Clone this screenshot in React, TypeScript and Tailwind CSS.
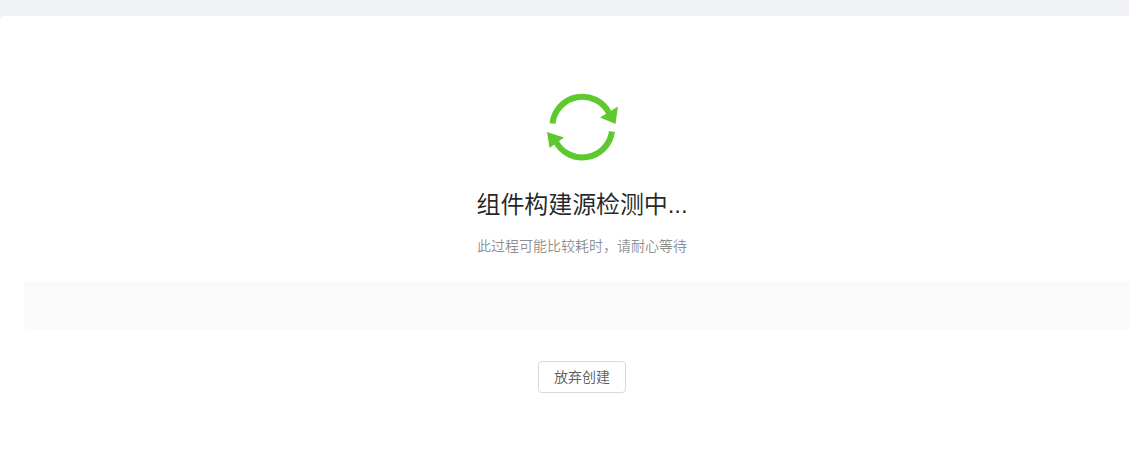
export default function App() {
  return (
    <div className="h-[462px] overflow-hidden bg-[#f0f2f5] pt-4 font-['Liberation_Sans','Noto_Sans_CJK_SC',sans-serif]">
      <div className="h-[500px] w-[1164px] rounded bg-white px-6 pt-[75px]">
        <div className="flex flex-col items-center">
          <svg width="72" height="72" viewBox="0 0 72 72" fill="none" className="block">
            <path d="M6.5 32.5A30 30 0 0 1 63 22" stroke="#5ec82f" strokeWidth="6" />
            <path d="M72 15.5L69.5 33L54 26.5Z" fill="#5ec82f" />
            <path d="M66 40.5A30 30 0 0 1 9.5 50" stroke="#5ec82f" strokeWidth="6" />
            <path d="M1 41L18 46.5L3.5 57Z" fill="#5ec82f" />
          </svg>
          <h1 className="mt-[26px] text-2xl leading-8 tracking-[-0.1px] text-black/85">组件构建源检测中...</h1>
          <p className="mt-3.5 text-sm leading-[22px] text-black/45">此过程可能比较耗时，请耐心等待</p>
        </div>
        <div className="mt-6 h-12 rounded-sm bg-[#fafafa]" />
        <div className="mt-8 flex justify-center">
          <button className="h-8 w-[88px] rounded border border-[#d9d9d9] bg-white text-sm text-black/65">放弃创建</button>
        </div>
      </div>
    </div>
  );
}
